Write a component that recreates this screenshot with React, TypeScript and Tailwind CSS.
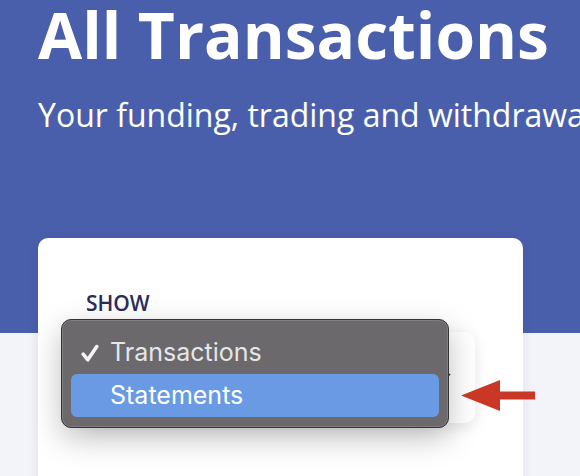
import React from 'react';

type OptionRowProps = {
  label: string;
  checked?: boolean;
  active?: boolean;
};

function OptionRow({ label, checked = false, active = false }: OptionRowProps) {
  return (
    <div
      className={`flex h-[43px] items-center rounded-[6px] pl-[10px] ${
        active ? 'bg-[#6a9ae3] text-white' : 'text-[#e6e6e6]'
      }`}
    >
      <span className="flex w-[29px] items-center">
        {checked && (
          <svg width="18" height="18" viewBox="0 0 18 18" fill="none">
            <path d="M2.2 10.2 L6.8 15.8 L15.8 2.6" stroke="#f4f4f4" strokeWidth="3.6" strokeLinecap="round" strokeLinejoin="round" />
          </svg>
        )}
      </span>
      <span className="text-[25px] leading-[25px] font-['Inter',sans-serif]">{label}</span>
    </div>
  );
}

export default function App() {
  return (
    <div className="relative h-[476px] w-full overflow-hidden bg-[#f3f4f9] font-['Open_Sans',sans-serif]">
      <header className="h-[333px] bg-[#4a5fac] px-[38px] pt-[3px] text-white">
        <h1 className="whitespace-nowrap text-[64px] leading-[64px] font-bold">All Transactions</h1>
        <p className="mt-[32px] whitespace-nowrap text-[32px] leading-[32px]">
          Your funding, trading and withdrawals
        </p>
      </header>

      <section className="relative -mt-[95px] ml-[38px] h-[300px] w-[485px] rounded-[10px] bg-white px-[48px] pt-[55px] shadow-[0_2px_12px_rgba(20,30,80,0.08)]">
        <div className="text-[21px] leading-[21px] font-semibold text-[#2b2c5a]">SHOW</div>

        <div className="relative mt-[18px] h-[91px] rounded-[10px] bg-white shadow-[0_4px_16px_rgba(0,0,0,0.1)]">
          <svg
            className="absolute right-[24px] top-[40px]"
            width="12"
            height="10"
            viewBox="0 0 12 10"
            fill="none"
          >
            <path d="M1 2 L6 7 L11 2" stroke="#333" strokeWidth="1.5" />
          </svg>

          {/* open dropdown menu */}
          <div className="absolute -left-[25px] -top-[13px] w-[388px] h-[109px] rounded-[10px] border border-[#343336] bg-[#6b696c] px-[9px] pt-[11px] pb-[10px] shadow-[inset_0_0_0_1px_rgba(255,255,255,0.14),0_10px_30px_rgba(0,0,0,0.25)]">
            <OptionRow label="Transactions" checked />
            <OptionRow label="Statements" active />
          </div>
        </div>
      </section>

      <svg className="absolute left-[461px] top-[380px]" width="75" height="31" viewBox="0 0 75 31">
        <polygon points="0,15.5 39,0 39,11.5 74,11.5 74,19.5 39,19.5 39,31" fill="#cb3727" />
      </svg>
    </div>
  );
}
